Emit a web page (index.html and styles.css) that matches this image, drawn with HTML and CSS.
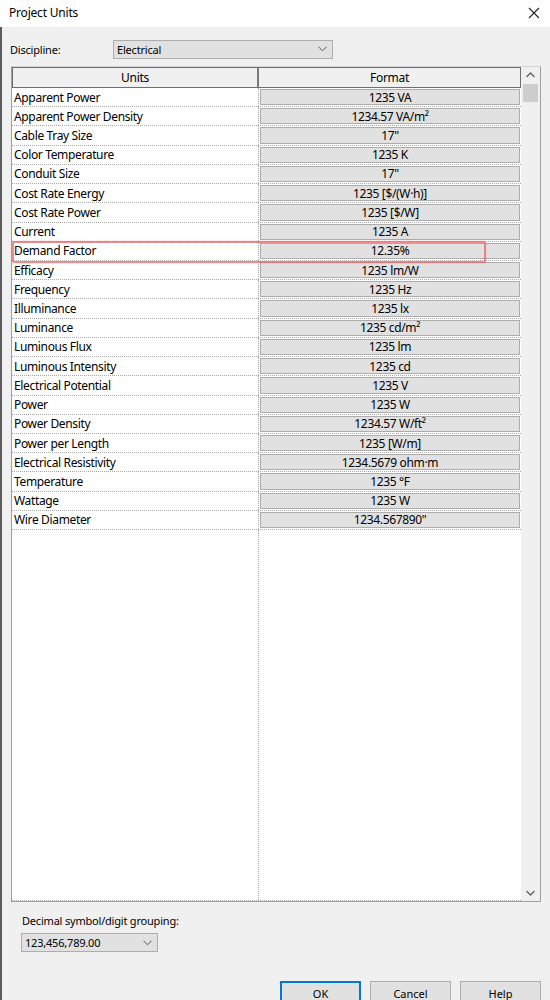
FILE: index.html
```html
<!DOCTYPE html>
<html>
<head>
<meta charset="utf-8">
<link rel="stylesheet" href="styles.css">
</head>
<body>
<div class="window">
  <div class="titlebar">
    <span class="title">Project Units</span>
    <svg class="close" width="12" height="12" viewBox="0 0 12 12"><path d="M1 1 L11 11 M11 1 L1 11" stroke="#222" stroke-width="1.1" fill="none"/></svg>
  </div>
  <div class="content">
    <div class="discipline">
      <span class="label">Discipline:</span>
      <div class="combo wide"><span>Electrical</span><svg width="9" height="6" viewBox="0 0 9 6"><path d="M0.5 0.8 L4.5 4.8 L8.5 0.8" stroke="#555" fill="none"/></svg></div>
    </div>
    <div class="grid">
      <div class="cols">
        <div class="header">
          <div class="hcell hunit">Units</div>
          <div class="hcell hfmt">Format</div>
        </div>
        <div class="rows">
          <div class="row"><div class="unit">Apparent Power</div><div class="fmt"><div class="btn">1235 VA</div></div></div>
          <div class="row"><div class="unit">Apparent Power Density</div><div class="fmt"><div class="btn">1234.57 VA/m²</div></div></div>
          <div class="row"><div class="unit">Cable Tray Size</div><div class="fmt"><div class="btn">17"</div></div></div>
          <div class="row"><div class="unit">Color Temperature</div><div class="fmt"><div class="btn">1235 K</div></div></div>
          <div class="row"><div class="unit">Conduit Size</div><div class="fmt"><div class="btn">17"</div></div></div>
          <div class="row"><div class="unit">Cost Rate Energy</div><div class="fmt"><div class="btn">1235 [$/(W·h)]</div></div></div>
          <div class="row"><div class="unit">Cost Rate Power</div><div class="fmt"><div class="btn">1235 [$/W]</div></div></div>
          <div class="row"><div class="unit">Current</div><div class="fmt"><div class="btn">1235 A</div></div></div>
          <div class="row"><div class="unit">Demand Factor</div><div class="fmt"><div class="btn">12.35%</div></div></div>
          <div class="row"><div class="unit">Efficacy</div><div class="fmt"><div class="btn">1235 lm/W</div></div></div>
          <div class="row"><div class="unit">Frequency</div><div class="fmt"><div class="btn">1235 Hz</div></div></div>
          <div class="row"><div class="unit">Illuminance</div><div class="fmt"><div class="btn">1235 lx</div></div></div>
          <div class="row"><div class="unit">Luminance</div><div class="fmt"><div class="btn">1235 cd/m²</div></div></div>
          <div class="row"><div class="unit">Luminous Flux</div><div class="fmt"><div class="btn">1235 lm</div></div></div>
          <div class="row"><div class="unit">Luminous Intensity</div><div class="fmt"><div class="btn">1235 cd</div></div></div>
          <div class="row"><div class="unit">Electrical Potential</div><div class="fmt"><div class="btn">1235 V</div></div></div>
          <div class="row"><div class="unit">Power</div><div class="fmt"><div class="btn">1235 W</div></div></div>
          <div class="row"><div class="unit">Power Density</div><div class="fmt"><div class="btn">1234.57 W/ft²</div></div></div>
          <div class="row"><div class="unit">Power per Length</div><div class="fmt"><div class="btn">1235 [W/m]</div></div></div>
          <div class="row"><div class="unit">Electrical Resistivity</div><div class="fmt"><div class="btn">1234.5679 ohm·m</div></div></div>
          <div class="row"><div class="unit">Temperature</div><div class="fmt"><div class="btn">1235 °F</div></div></div>
          <div class="row"><div class="unit">Wattage</div><div class="fmt"><div class="btn">1235 W</div></div></div>
          <div class="row"><div class="unit">Wire Diameter</div><div class="fmt"><div class="btn">1234.567890"</div></div></div>
          <div class="row filler"><div class="unit"></div><div class="fmt"></div></div>
        </div>
      </div>
      <div class="scrollbar">
        <svg class="arrow" width="9" height="6" viewBox="0 0 9 6"><path d="M0.5 5 L4.5 1 L8.5 5" stroke="#606060" stroke-width="1.3" fill="none"/></svg>
        <div class="thumb"></div>
        <div class="track"></div>
        <svg class="arrow" width="9" height="6" viewBox="0 0 9 6"><path d="M0.5 1 L4.5 5 L8.5 1" stroke="#606060" stroke-width="1.3" fill="none"/></svg>
      </div>
      <div class="highlight"></div>
    </div>
    <div class="decimal">
      <div class="label">Decimal symbol/digit grouping:</div>
      <div class="combo small"><span>123,456,789.00</span><svg width="9" height="6" viewBox="0 0 9 6"><path d="M0.5 0.8 L4.5 4.8 L8.5 0.8" stroke="#555" fill="none"/></svg></div>
    </div>
    <div class="buttons">
      <div class="dbtn ok">OK</div>
      <div class="dbtn">Cancel</div>
      <div class="dbtn">Help</div>
    </div>
  </div>
</div>
</body>
</html>
```
FILE: styles.css
```css
* { box-sizing: border-box; }
html, body { margin: 0; padding: 0; }
body {
  width: 550px;
  height: 1000px;
  overflow: hidden;
  font-family: "Noto Sans", "Open Sans", sans-serif;
  font-size: 11.5px;
  color: #000;
  background: #f0f0f0;
}
.window {
  width: 550px;
  height: 1000px;
  background: #f0f0f0;
  position: relative;
}
.titlebar {
  height: 27px;
  background: #fff;
  display: flex;
  align-items: center;
  justify-content: space-between;
  padding: 0 10px 2px 9px;
}
.title { font-size: 12px; letter-spacing: -0.2px; }
.content {
  border-left: 2px solid #5c5c5c;
  height: 973px;
  padding-top: 13px;
}
.discipline {
  display: flex;
  align-items: center;
  height: 18px;
}
.discipline .label { width: 111px; padding-left: 8px; font-size: 11px; letter-spacing: -0.2px; }
.combo {
  display: flex;
  align-items: center;
  justify-content: space-between;
  height: 19px;
  background: #e1e1e1;
  border: 1px solid #adadad;
  padding: 0 5px 0 3px;
  font-size: 11px;
  letter-spacing: -0.2px;
}
.combo.wide { width: 220px; }
.combo.small { width: 137px; }
.grid {
  position: relative;
  margin: 8px 0 0 9px;
  width: 530px;
  height: 836px;
  border: 1px solid #a0a0a0;
  border-top-color: #d4d4d4;
  display: flex;
  background: #fff;
}
.cols {
  width: 509px;
  display: flex;
  flex-direction: column;
}
.header {
  display: flex;
  height: 21px;
  background: #f0f0f0;
  border-bottom: 1px solid #6e6e6e;
}
.hcell {
  display: flex;
  align-items: center;
  justify-content: center;
  font-size: 12px;
  letter-spacing: -0.3px;
}
.hunit { width: 247px; border-right: 2px solid #7a7a7a; border-left: 1px solid #6e6e6e; border-top: 1px solid #6e6e6e; }
.hfmt { flex: 1; border-right: 1px solid #6e6e6e; border-top: 1px solid #6e6e6e; }
.rows { flex: 1; display: flex; flex-direction: column; }
.row {
  display: flex;
  height: 19.23px;
  border-bottom: 1px dotted #a8a8a8;
}
.unit {
  width: 247px;
  padding-left: 2px;
  display: flex;
  align-items: center;
  border-right: 1px dotted #a8a8a8;
  font-size: 12px;
  letter-spacing: -0.35px;
  white-space: nowrap;
}
.fmt {
  flex: 1;
  padding: 1px;
  display: flex;
}
.btn {
  flex: 1;
  background: #e1e1e1;
  border: 1px solid #adadad;
  display: flex;
  align-items: center;
  justify-content: center;
  font-size: 12px;
  letter-spacing: -0.35px;
  white-space: nowrap;
}
.row.filler { flex: 1; height: auto; }
.scrollbar {
  flex: 1;
  background: #f0f0f0;
  display: flex;
  flex-direction: column;
  align-items: center;
  padding: 5px 0 5px;
}
.arrow { flex: none; }
.thumb {
  width: 15px;
  height: 18px;
  margin-top: 6px;
  background: #cdcdcd;
}
.track { flex: 1; }
.highlight {
  position: absolute;
  left: 0;
  top: 174px;
  width: 474px;
  height: 22px;
  border: 2px solid rgba(232, 100, 105, 0.75);
  border-radius: 2px;
  box-shadow: 0 0 2px rgba(232, 100, 105, 0.4);
  pointer-events: none;
}
.decimal {
  margin: 11px 0 0 19px;
}
.decimal .label { font-size: 11px; margin-bottom: 5px; padding-left: 1px; letter-spacing: -0.2px; }
.buttons {
  display: flex;
  justify-content: flex-end;
  gap: 9px;
  margin-top: 29px;
  padding-right: 9px;
}
.dbtn {
  width: 81px;
  height: 24px;
  background: #e1e1e1;
  border: 1px solid #adadad;
  display: flex;
  align-items: center;
  justify-content: center;
  font-size: 11px;
}
.dbtn.ok { border: 2px solid #0078d7; }
```
